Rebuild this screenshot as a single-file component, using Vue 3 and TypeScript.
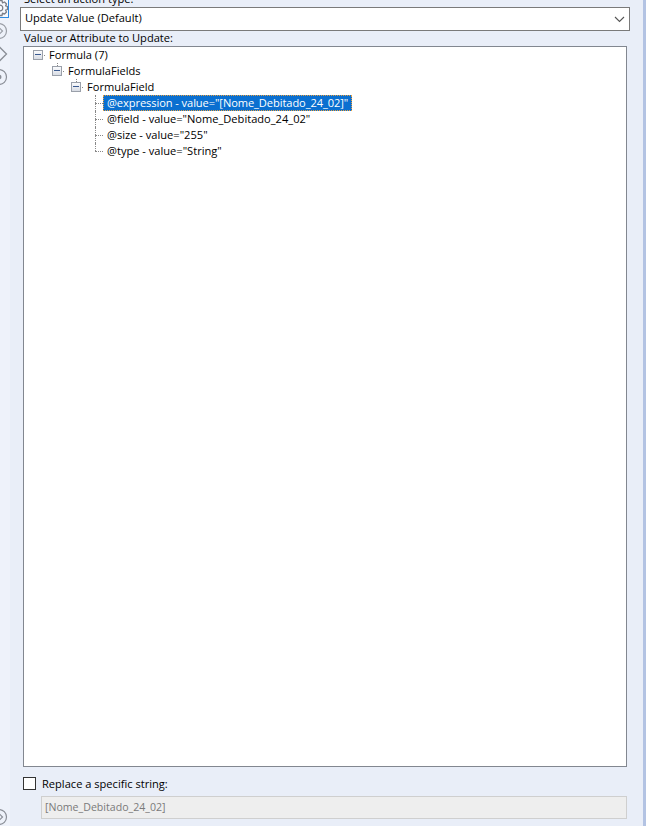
<script setup lang="ts">
interface Row { label: string; depth: number; box?: boolean; selected?: boolean; up?: boolean; last?: boolean }
const rows: Row[] = [
  { label: 'Formula (7)', depth: 0, box: true },
  { label: 'FormulaFields', depth: 1, box: true, up: true },
  { label: 'FormulaField', depth: 2, box: true, up: true },
  { label: '@expression - value="[Nome_Debitado_24_02]"', depth: 3, selected: true, up: true },
  { label: '@field - value="Nome_Debitado_24_02"', depth: 3, up: true },
  { label: '@size - value="255"', depth: 3, up: true },
  { label: '@type - value="String"', depth: 3, up: true, last: true },
]
</script>

<template>
  <div class="page">
    <nav class="rail">
      <div class="tab active">
        <svg width="18" height="18" viewBox="0 0 18 18" class="ic gear"><path d="M-1 1.500H2L2.500 3.800 4.500 3 6.500 5 5.600 6.800 7.500 7.500V10.500L5.600 11.200 6.500 13 4.500 15 2.500 14.200 2 16.500H-1" fill="none" stroke="#7b7f88" stroke-width="1.300" stroke-linejoin="round"/><circle cx="0" cy="9" r="2.800" fill="none" stroke="#7b7f88" stroke-width="1.200"/></svg>
      </div>
      <div class="tab">
        <svg width="18" height="18" viewBox="0 0 18 18" class="ic"><circle cx="-1" cy="9" r="7.500" fill="none" stroke="#9a9ea6" stroke-width="1.200"/><path d="M-1 5.500L2.500 9-1 12.500" fill="none" stroke="#9a9ea6" stroke-width="1.200"/></svg>
      </div>
      <div class="tab">
        <svg width="18" height="18" viewBox="0 0 18 18" class="ic"><path d="M-1 1.500L6.500 9-1 16.500" fill="none" stroke="#8a8e96" stroke-width="1.300"/></svg>
      </div>
      <div class="tab">
        <svg width="18" height="18" viewBox="0 0 18 18" class="ic"><circle cx="-1" cy="9" r="7.500" fill="none" stroke="#8a8e96" stroke-width="1.200"/><circle cx="-1" cy="9" r="2.500" fill="#8a8e96"/></svg>
      </div>
      <div class="rail-fill"></div>
      <div class="tab last">
        <svg width="18" height="18" viewBox="0 0 18 18" class="ic"><circle cx="-1" cy="9" r="7.500" fill="none" stroke="#8a8e96" stroke-width="1.200"/><path d="M-1 5.500L2.500 9-1 12.500" fill="none" stroke="#8a8e96" stroke-width="1.200"/></svg>
      </div>
    </nav>

    <main class="panel">
      <div class="caption clipped">Select an action type:</div>
      <div class="select">
        <span class="select-text">Update Value (Default)</span>
        <svg width="11" height="7" viewBox="0 0 11 7"><path d="M1 1l4.500 4.500L10 1" fill="none" stroke="#555" stroke-width="1.100"/></svg>
      </div>
      <div class="caption second">Value or Attribute to Update:</div>
      <div class="tree">
        <div v-for="(row, i) in rows" :key="i" class="row" :class="'d' + row.depth">
          <span class="gutter" :class="{ narrow: row.box }">
            <i v-if="row.up" class="vline" :class="{ long: row.depth === 3, end: row.last }"></i>
            <i class="hline" :class="{ wide: !row.box }"></i>
            <b v-if="row.box" class="expander"><em></em></b>
          </span>
          <span class="label" :class="{ selected: row.selected }">{{ row.label }}</span>
        </div>
      </div>
      <label class="check">
        <span class="box"></span>
        <span>Replace a specific string:</span>
      </label>
      <div class="input">[Nome_Debitado_24_02]</div>
    </main>
    <div class="edge"></div>
  </div>
</template>

<style scoped>
.page {
  display: flex;
  width: 646px;
  height: 826px;
  overflow: hidden;
  background: #e9eef8;
  font-family: "Open Sans", "Noto Sans", sans-serif;
  font-size: 11.1px;
  color: #000;
}
.rail {
  width: 10px;
  flex: none;
  display: flex;
  flex-direction: column;
  background: #eef2fa;
}
.tab {
  height: 23px;
  width: 8px;
  flex: none;
  overflow: hidden;
}
.tab.active {
  height: 18px;
  width: 9px;
  box-sizing: border-box;
  background: #f6f9fe;
  border-right: 1px solid #2f8be0;
  border-bottom: 1px solid #2f8be0;
  margin-bottom: 4px;
}
.ic { display: block; }
.gear { margin-top: -1px; }
.rail-fill { flex: 1; }
.tab.last { height: 18px; margin-bottom: 0; }
.panel {
  flex: 1;
  min-width: 0;
  padding-left: 10px;
  display: flex;
  flex-direction: column;
}
.caption { height: 16px; line-height: 16px; padding-left: 4px; white-space: nowrap; flex: none; }
.clipped { margin-top: -9px; }
.select {
  width: 610px;
  height: 24px;
  flex: none;
  box-sizing: border-box;
  border: 1px solid #7a7a7a;
  background: #fff;
  display: flex;
  align-items: center;
  justify-content: space-between;
  padding: 0 4px;
}
.select-text { line-height: 14px; margin-top: -2px; }
.second { margin-top: -1px; }
.tree {
  margin-left: 3px;
  width: 604px;
  height: 721px;
  box-sizing: border-box;
  border: 1px solid #828790;
  background: #fff;
  flex: none;
}
.row { height: 16px; display: flex; align-items: center; }
.gutter { position: relative; width: 20px; height: 16px; flex: none; }
.gutter.narrow { width: 16px; }
.d0 { padding-left: 5px; }
.d1 { padding-left: 24px; }
.d2 { padding-left: 43px; }
.d3 { padding-left: 59px; }
.label { padding: 0 3px; line-height: 14px; height: 14px; white-space: nowrap; border: 1px solid transparent; }
.label.selected {
  background: #0a6fd0;
  color: #fff;
  border: 1px dotted #e8a040;
  letter-spacing: -0.08px;
}
.vline { position: absolute; left: 9px; top: 0; height: 3px; border-left: 1px dotted #888; }
.vline.long { left: 12px; height: 16px; }
.vline.end { height: 8px; }
.hline { position: absolute; left: 13px; top: 8px; width: 3px; border-top: 1px dotted #888; }
.hline.wide { left: 12px; width: 8px; }
.expander {
  position: absolute;
  left: 4px;
  top: 3px;
  width: 10px;
  height: 10px;
  box-sizing: border-box;
  border: 1px solid #9aa0aa;
  background: linear-gradient(#fafbfd, #d8dce4);
}
.expander em { position: absolute; left: 1px; top: 3px; width: 6px; height: 1px; background: #3a5a90; }
.check {
  display: flex;
  align-items: center;
  gap: 6px;
  margin: 9px 0 0 3px;
  height: 15px;
}
.box {
  width: 13px;
  height: 13px;
  box-sizing: border-box;
  border: 1px solid #333;
  background: #fff;
}
.input {
  margin: 5px 0 0 21px;
  width: 586px;
  height: 23px;
  box-sizing: border-box;
  border: 1px solid #cfcfcf;
  background: #eeeeee;
  color: #7a7a7a;
  padding-left: 3px;
  line-height: 20px;
  font-size: 10.6px;
}
.edge { width: 3px; flex: none; background: #b3c3e3; }
</style>
